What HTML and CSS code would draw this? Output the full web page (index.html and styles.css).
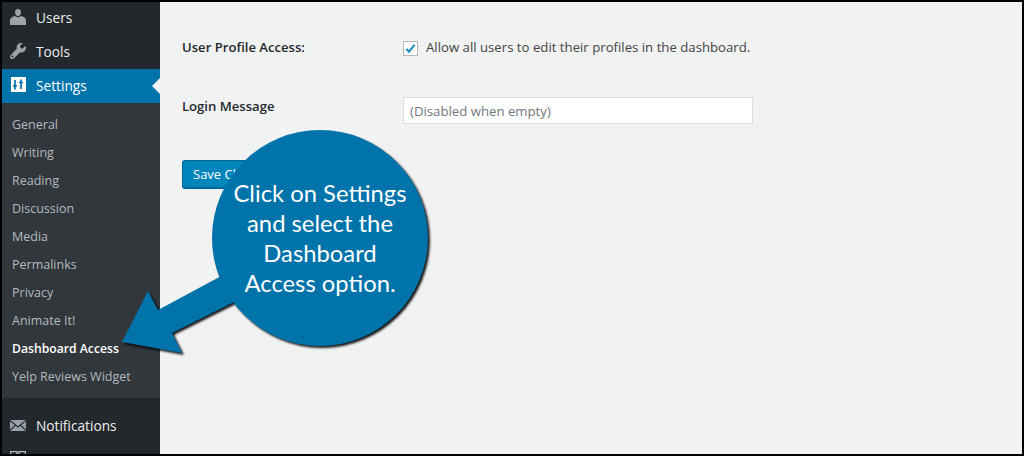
FILE: index.html
```html
<!DOCTYPE html>
<html lang="en">
<head>
<meta charset="utf-8">
<title>Dashboard Access settings</title>
<link rel="stylesheet" href="styles.css">
</head>
<body>
<div class="frame">
  <aside class="sidebar">
    <ul class="menu menu-top">
      <li class="menu-item">
        <svg class="icon" viewBox="0 0 16 16"><path d="M8 0C9.900 0 11 1.400 11 3.300 11 5.400 9.800 7.200 8 7.200S5 5.400 5 3.300C5 1.400 6.100 0 8 0zM5.200 7C6 7.800 6.900 8.200 8 8.200S10 7.800 10.800 7C13.800 7.600 16 9 16 11.500V16H0V11.500C0 9 2.200 7.600 5.200 7z"/></svg>
        <span class="menu-text">Users</span>
      </li>
      <li class="menu-item">
        <svg class="icon" viewBox="0 0 16 16"><path d="M15.700 2.700l-2.900 2.800-2.300-.4-.4-2.300L12.900 0C11 -.4 9.100 .1 7.900 1.300 6.700 2.500 6.300 4.200 6.800 5.800L.8 11.900C-.3 13 -.3 14.500 .7 15.400 1.700 16.300 3.100 16.300 4.100 15.300L10.200 9.200C11.800 9.700 13.500 9.300 14.700 8.100 15.900 6.900 16.300 4.700 15.700 2.700zM2.400 14.500A1 1 0 1 1 2.400 12.500 1 1 0 0 1 2.400 14.500z"/></svg>
        <span class="menu-text">Tools</span>
      </li>
      <li class="menu-item menu-item-current">
        <svg class="icon" viewBox="0 0 16 16"><rect x="1" width="15" height="15" fill="#fff"/><path d="M5 3V12.500M11 2.500V12M3 9H7M9 5.500H13" fill="none" stroke="#0073aa" stroke-width="1.700"/></svg>
        <span class="menu-text">Settings</span>
      </li>
    </ul>
    <ul class="submenu">
      <li>General</li>
      <li>Writing</li>
      <li>Reading</li>
      <li>Discussion</li>
      <li>Media</li>
      <li>Permalinks</li>
      <li>Privacy</li>
      <li>Animate It!</li>
      <li class="submenu-current">Dashboard Access</li>
      <li>Yelp Reviews Widget</li>
    </ul>
    <ul class="menu menu-bottom">
      <li class="menu-item">
        <svg class="icon icon-mail" viewBox="0 0 16 11"><rect width="16" height="11" fill="#9ba1a8"/><path d="M0 .5L8 7 16 .5M0 10.500L5.500 5M16 10.500L10.500 5" fill="none" stroke="#23282d" stroke-width="1.100"/></svg>
        <span class="menu-text">Notifications</span>
      </li>
      <li class="menu-item">
        <svg class="icon" viewBox="0 0 16 16"><path d="M.5.5h6.500v6.500H.5zM9 .5h6.500v6.500H9zM.5 9h6.500v6.500H.5zM9 9h6.500v6.500H9z" fill="none" stroke="#b4b9be" stroke-width="1.400"/></svg>
      </li>
    </ul>
  </aside>
  <main class="content">
    <div class="form-row form-row-first">
      <div class="form-label">User Profile Access:</div>
      <div class="form-field">
        <span class="checkbox">
          <svg viewBox="0 0 16 16"><path d="M3 8.500l3.200 3.300L13 3.500" fill="none" stroke="#1e8cbe" stroke-width="2.600"/></svg>
        </span>
        <span class="check-label">Allow all users to edit their profiles in the dashboard.</span>
      </div>
    </div>
    <div class="form-row form-row-second">
      <div class="form-label">Login Message</div>
      <div class="form-field">
        <div class="text-input">(Disabled when empty)</div>
      </div>
    </div>
    <button class="save-button" type="button">Save Changes</button>
  </main>
  <div class="callout">
    <svg class="callout-shape" viewBox="0 0 1020 452">
      <g transform="translate(-2 -2)">
        <path fill="#0073aa" d="M122 342L148 291 158 310 225 274 238 300 172 333 182 353Z"/>
        <circle fill="#0073aa" cx="320" cy="238" r="108"/>
      </g>
    </svg>
    <p class="callout-text">Click on Settings<br>and select the<br>Dashboard<br>Access option.</p>
  </div>
</div>
</body>
</html>
```
FILE: styles.css
```css
* { box-sizing: border-box; }

html, body {
  margin: 0;
  padding: 0;
  height: 100%;
}

body {
  font-family: "Open Sans", "Liberation Sans", sans-serif;
  background: #000;
}

.frame {
  position: relative;
  display: flex;
  width: 1024px;
  height: 456px;
  border: 2px solid #000;
  overflow: hidden;
  background-color: #f1f2f2;
  background-image: radial-gradient(circle, #ebeded 0.6px, transparent 1px);
  background-size: 8px 8px;
}

.sidebar {
  flex: 0 0 158px;
  display: flex;
  flex-direction: column;
  background: #23282d;
}

.menu, .submenu {
  flex: none;
  list-style: none;
  margin: 0;
  padding: 0;
}

.menu-item {
  position: relative;
  display: flex;
  align-items: center;
  height: 34px;
  padding: 0 0 2px 8px;
  gap: 10px;
  font-size: 13.7px;
  color: #eee;
}

.menu-text {
  line-height: 20px;
  padding-top: 2px;
}

.menu-top { margin-top: -1px; }

.menu-item-current {
  background: #0073aa;
  color: #fff;
}

.menu-item-current::after {
  content: "";
  position: absolute;
  right: 0;
  top: 9px;
  border: 8px solid transparent;
  border-right-color: #f1f2f2;
  border-left-width: 0;
}

.icon {
  flex: 0 0 16px;
  width: 16px;
  height: 16px;
  fill: #9ea3a8;
}

.icon-mail { height: 11px; }

.submenu {
  height: 295px;
  padding-top: 8px;
  background: #32373c;
}

.submenu li {
  height: 28px;
  line-height: 28px;
  padding-left: 10px;
  font-size: 12.5px;
  color: #b4b9be;
}

.submenu .submenu-current {
  color: #fff;
  font-weight: 600;
  font-size: 12.2px;
}

.menu-bottom { margin-top: 11px; }

.content {
  flex: 1;
  padding-left: 22px;
  color: #23282d;
}

.form-row {
  display: flex;
  align-items: center;
}

.form-row-first {
  height: 30px;
  margin-top: 30px;
}

.form-row-second {
  height: 27px;
  margin-top: 35px;
}

.form-label {
  flex: 0 0 221px;
  font-size: 13.1px;
  font-weight: 600;
}

.form-row-second .form-label {
  position: relative;
  top: -5px;
}

.form-field {
  display: flex;
  align-items: center;
  gap: 8px;
}

.checkbox {
  display: block;
  width: 15px;
  height: 15px;
  margin-top: 3px;
  border: 1px solid #b4b9be;
  background: #fff;
}

.checkbox svg {
  display: block;
  width: 13px;
  height: 13px;
}

.check-label {
  font-size: 13.2px;
  color: #444;
}

.text-input {
  width: 350px;
  height: 27px;
  line-height: 27px;
  padding-left: 6px;
  border: 1px solid #ddd;
  background: #fff;
  font-size: 13.2px;
  color: #72777c;
}

.save-button {
  display: block;
  width: 100px;
  height: 29px;
  margin-top: 36px;
  padding: 0 0 0 10px;
  border: 1px solid #006799;
  border-bottom-width: 2px;
  border-radius: 3px;
  background: #0085ba;
  color: #fff;
  font-family: inherit;
  font-size: 13px;
  text-align: left;
}

.callout {
  position: absolute;
  inset: 0;
}

.callout-shape {
  position: absolute;
  left: 0;
  top: 0;
  width: 1020px;
  height: 452px;
  filter: drop-shadow(2px 2px 1px rgba(0, 0, 0, 0.9));
}

.callout-text {
  position: absolute;
  left: 210px;
  top: 176px;
  width: 216px;
  margin: 0;
  font-family: Lato, "Open Sans", sans-serif;
  font-size: 23.8px;
  line-height: 30px;
  text-align: center;
  color: #fff;
}
```
